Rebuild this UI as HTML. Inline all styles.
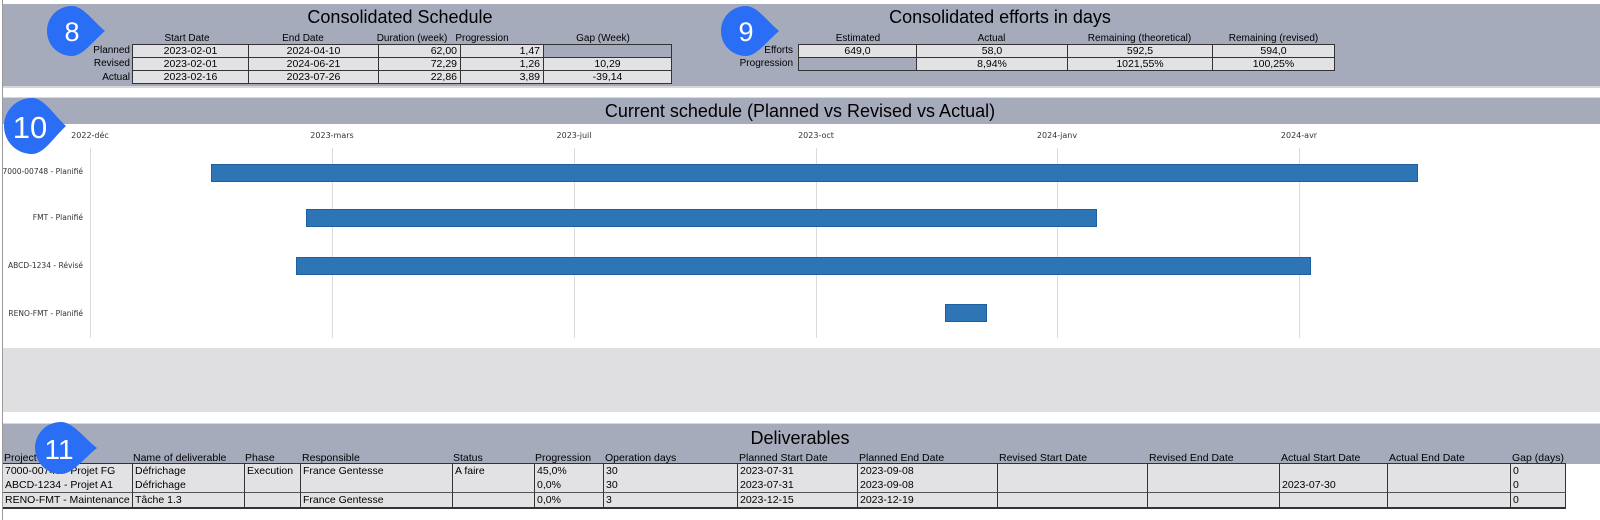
<!DOCTYPE html>
<html><head><meta charset="utf-8"><style>
*{margin:0;padding:0;box-sizing:border-box}
body{width:1600px;height:520px;background:#fff;position:relative;overflow:hidden;font-family:"Liberation Sans",sans-serif;color:#000}
.a{position:absolute}
.band{background:#a6abbb}
.t{font-size:18px;text-align:center}
.h{font-size:10px;text-align:center;color:#000}
.c{position:absolute;font-size:10.5px;height:14px;line-height:13px;border:1px solid #333;background:#e2e2e4;padding:0 3px}
.r{text-align:right}.m{text-align:center}
.lb{font-size:10px;text-align:right;position:absolute;width:60px}
.badge{position:absolute}
.g{position:absolute;width:1px;background:#dcdcdc;top:148px;height:190px}
.tk{position:absolute;top:131px;font-size:8px;color:#333;font-family:"DejaVu Sans",sans-serif;transform:translateX(-50%)}
.bar{position:absolute;background:#2e75b6;border:1px solid #1f5fa0;height:18px}
.cl{position:absolute;font-size:7.5px;color:#333;font-family:"DejaVu Sans",sans-serif;text-align:right;width:110px;left:-27px}
.d{position:absolute;font-size:10.5px;height:15px;line-height:14px;background:#e2e2e4;border-left:1px solid #333;border-bottom:1px solid #555;padding-left:2px;white-space:nowrap;overflow:hidden}
.dh{position:absolute;font-size:10.5px;top:452px;white-space:nowrap}
</style></head><body>
<div class="a" style="left:2px;top:0;width:1px;height:520px;background:#999"></div>
<div class="a band" style="left:3px;top:4px;width:1597px;height:82px"></div>
<div class="a" style="left:3px;top:86px;width:1597px;height:2px;background:#d8d8dc"></div>

<div class="a t" style="left:250px;top:7px;width:300px">Consolidated Schedule</div>
<div class="a h" style="left:132px;top:33px;width:110px">Start Date</div>
<div class="a h" style="left:248px;top:33px;width:110px">End Date</div>
<div class="a h" style="left:372px;top:33px;width:80px">Duration (week)</div>
<div class="a h" style="left:452px;top:33px;width:60px">Progression</div>
<div class="a h" style="left:533px;top:33px;width:140px">Gap (Week)</div>
<div class="lb" style="left:70px;top:45px">Planned</div>
<div class="lb" style="left:70px;top:58px">Revised</div>
<div class="lb" style="left:70px;top:72px">Actual</div>
<div class="c m" style="left:132px;top:44px;width:117px">2023-02-01</div>
<div class="c m" style="left:248px;top:44px;width:131px">2024-04-10</div>
<div class="c r" style="left:378px;top:44px;width:83px">62,00</div>
<div class="c r" style="left:460px;top:44px;width:84px">1,47</div>
<div class="c" style="left:543px;top:44px;width:129px;background:#a6abbb"></div>
<div class="c m" style="left:132px;top:57px;width:117px">2023-02-01</div>
<div class="c m" style="left:248px;top:57px;width:131px">2024-06-21</div>
<div class="c r" style="left:378px;top:57px;width:83px">72,29</div>
<div class="c r" style="left:460px;top:57px;width:84px">1,26</div>
<div class="c m" style="left:543px;top:57px;width:129px">10,29</div>
<div class="c m" style="left:132px;top:70px;width:117px">2023-02-16</div>
<div class="c m" style="left:248px;top:70px;width:131px">2023-07-26</div>
<div class="c r" style="left:378px;top:70px;width:83px">22,86</div>
<div class="c r" style="left:460px;top:70px;width:84px">3,89</div>
<div class="c m" style="left:543px;top:70px;width:129px">-39,14</div>

<div class="a t" style="left:850px;top:7px;width:300px">Consolidated efforts in days</div>
<div class="a h" style="left:800px;top:33px;width:116px">Estimated</div>
<div class="a h" style="left:916px;top:33px;width:151px">Actual</div>
<div class="a h" style="left:1067px;top:33px;width:145px">Remaining (theoretical)</div>
<div class="a h" style="left:1212px;top:33px;width:123px">Remaining (revised)</div>
<div class="lb" style="left:733px;top:45px">Efforts</div>
<div class="lb" style="left:733px;top:58px">Progression</div>
<div class="c m" style="left:798px;top:44px;width:119px">649,0</div>
<div class="c m" style="left:916px;top:44px;width:152px">58,0</div>
<div class="c m" style="left:1067px;top:44px;width:146px">592,5</div>
<div class="c m" style="left:1212px;top:44px;width:123px">594,0</div>
<div class="c" style="left:798px;top:57px;width:119px;background:#a6abbb"></div>
<div class="c m" style="left:916px;top:57px;width:152px">8,94%</div>
<div class="c m" style="left:1067px;top:57px;width:146px">1021,55%</div>
<div class="c m" style="left:1212px;top:57px;width:123px">100,25%</div>

<div class="a" style="left:3px;top:97px;width:1597px;height:1px;background:#d8d8dc"></div>
<div class="a band" style="left:3px;top:98px;width:1597px;height:26px"></div>
<div class="a t" style="left:500px;top:101px;width:600px">Current schedule (Planned vs Revised vs Actual)</div>
<div class="a" style="left:1565px;top:124px;width:35px;height:288px;background:#fff"></div>
<div class="g" style="left:90px"></div><div class="g" style="left:332px"></div><div class="g" style="left:574px"></div><div class="g" style="left:816px"></div><div class="g" style="left:1057px"></div><div class="g" style="left:1299px"></div>
<div class="tk" style="left:90px">2022-déc</div><div class="tk" style="left:332px">2023-mars</div><div class="tk" style="left:574px">2023-juil</div><div class="tk" style="left:816px">2023-oct</div><div class="tk" style="left:1057px">2024-janv</div><div class="tk" style="left:1299px">2024-avr</div>
<div class="cl" style="top:167px">7000-00748 - Planifié</div>
<div class="cl" style="top:213px">FMT - Planifié</div>
<div class="cl" style="top:261px">ABCD-1234 - Révisé</div>
<div class="cl" style="top:309px">RENO-FMT - Planifié</div>
<div class="bar" style="left:211px;top:164px;width:1207px"></div>
<div class="bar" style="left:306px;top:209px;width:791px"></div>
<div class="bar" style="left:296px;top:257px;width:1015px"></div>
<div class="bar" style="left:945px;top:304px;width:42px"></div>
<div class="a" style="left:3px;top:348px;width:1597px;height:64px;background:#dfdfe2"></div>

<div class="a" style="left:3px;top:423px;width:1597px;height:1px;background:#d8d8dc"></div>
<div class="a band" style="left:3px;top:424px;width:1597px;height:40px"></div>
<div class="a t" style="left:650px;top:428px;width:300px">Deliverables</div>
<div class="dh" style="left:4px">Project</div><div class="dh" style="left:133px">Name of deliverable</div><div class="dh" style="left:245px">Phase</div><div class="dh" style="left:302px">Responsible</div><div class="dh" style="left:453px">Status</div><div class="dh" style="left:535px">Progression</div><div class="dh" style="left:605px">Operation days</div><div class="dh" style="left:739px">Planned Start Date</div><div class="dh" style="left:859px">Planned End Date</div><div class="dh" style="left:999px">Revised Start Date</div><div class="dh" style="left:1149px">Revised End Date</div><div class="dh" style="left:1281px">Actual Start Date</div><div class="dh" style="left:1389px">Actual End Date</div><div class="dh" style="left:1512px">Gap (days)</div>
<div class="a" style="left:3px;top:463px;width:1563px;height:1px;background:#333"></div>

<div class="d" style="left:3px;top:464px;width:130px;border-left:none">7000-00748 - Projet FG</div>
<div class="d" style="left:132px;top:464px;width:113px">Défrichage</div>
<div class="d" style="left:244px;top:464px;width:57px">Execution</div>
<div class="d" style="left:300px;top:464px;width:153px">France Gentesse</div>
<div class="d" style="left:452px;top:464px;width:83px">A faire</div>
<div class="d" style="left:534px;top:464px;width:70px">45,0%</div>
<div class="d" style="left:603px;top:464px;width:135px">30</div>
<div class="d" style="left:737px;top:464px;width:121px">2023-07-31</div>
<div class="d" style="left:857px;top:464px;width:141px">2023-09-08</div>
<div class="d" style="left:997px;top:464px;width:151px"></div>
<div class="d" style="left:1147px;top:464px;width:133px"></div>
<div class="d" style="left:1279px;top:464px;width:109px"></div>
<div class="d" style="left:1387px;top:464px;width:124px"></div>
<div class="d" style="left:1510px;top:464px;width:56px;border-right:1px solid #333">0</div>

<div class="d" style="left:3px;top:478px;width:130px;border-left:none">ABCD-1234 - Projet A1</div>
<div class="d" style="left:132px;top:478px;width:113px">Défrichage</div>
<div class="d" style="left:244px;top:478px;width:57px"></div>
<div class="d" style="left:300px;top:478px;width:153px"></div>
<div class="d" style="left:452px;top:478px;width:83px"></div>
<div class="d" style="left:534px;top:478px;width:70px">0,0%</div>
<div class="d" style="left:603px;top:478px;width:135px">30</div>
<div class="d" style="left:737px;top:478px;width:121px">2023-07-31</div>
<div class="d" style="left:857px;top:478px;width:141px">2023-09-08</div>
<div class="d" style="left:997px;top:478px;width:151px"></div>
<div class="d" style="left:1147px;top:478px;width:133px"></div>
<div class="d" style="left:1279px;top:478px;width:109px">2023-07-30</div>
<div class="d" style="left:1387px;top:478px;width:124px"></div>
<div class="d" style="left:1510px;top:478px;width:56px;border-right:1px solid #333">0</div>

<div class="d" style="left:3px;top:493px;width:130px;border-left:none">RENO-FMT - Maintenance o</div>
<div class="d" style="left:132px;top:493px;width:113px">Tâche 1.3</div>
<div class="d" style="left:244px;top:493px;width:57px"></div>
<div class="d" style="left:300px;top:493px;width:153px">France Gentesse</div>
<div class="d" style="left:452px;top:493px;width:83px"></div>
<div class="d" style="left:534px;top:493px;width:70px">0,0%</div>
<div class="d" style="left:603px;top:493px;width:135px">3</div>
<div class="d" style="left:737px;top:493px;width:121px">2023-12-15</div>
<div class="d" style="left:857px;top:493px;width:141px">2023-12-19</div>
<div class="d" style="left:997px;top:493px;width:151px"></div>
<div class="d" style="left:1147px;top:493px;width:133px"></div>
<div class="d" style="left:1279px;top:493px;width:109px"></div>
<div class="d" style="left:1387px;top:493px;width:124px"></div>
<div class="d" style="left:1510px;top:493px;width:56px;border-right:1px solid #333">0</div>
<div class="a" style="left:3px;top:507px;width:1563px;height:2px;background:#333"></div>

<svg class="badge" style="left:46px;top:5px;width:60px;height:52px" viewBox="0 0 60 52"><path d="M26 1 C12 1 1 12 1 26 C1 40 12 51 26 51 C37 51 47 36 59 26 C47 16 37 1 26 1Z" fill="#2a6ef5"/><text x="26" y="36" font-size="27" fill="#fff" text-anchor="middle" font-family="Liberation Sans">8</text></svg>
<svg class="badge" style="left:720px;top:5px;width:60px;height:52px" viewBox="0 0 60 52"><path d="M26 1 C12 1 1 12 1 26 C1 40 12 51 26 51 C37 51 47 36 59 26 C47 16 37 1 26 1Z" fill="#2a6ef5"/><text x="26" y="36" font-size="27" fill="#fff" text-anchor="middle" font-family="Liberation Sans">9</text></svg>
<svg class="badge" style="left:3px;top:97px;width:64px;height:58px" viewBox="0 0 64 58"><path d="M29 1 C13 1 1 14 1 29 C1 44 13 57 29 57 C41 57 50 41 63 29 C50 17 41 1 29 1Z" fill="#2a6ef5"/><text x="27" y="41" font-size="31" fill="#fff" text-anchor="middle" font-family="Liberation Sans">10</text></svg>
<svg class="badge" style="left:34px;top:421px;width:64px;height:54px" viewBox="0 0 64 54"><path d="M27 1 C12 1 1 13 1 27 C1 41 12 53 27 53 C39 53 49 38 63 27 C49 16 39 1 27 1Z" fill="#2a6ef5"/><text x="25" y="38" font-size="28" fill="#fff" text-anchor="middle" font-family="Liberation Sans">11</text></svg>
</body></html>
